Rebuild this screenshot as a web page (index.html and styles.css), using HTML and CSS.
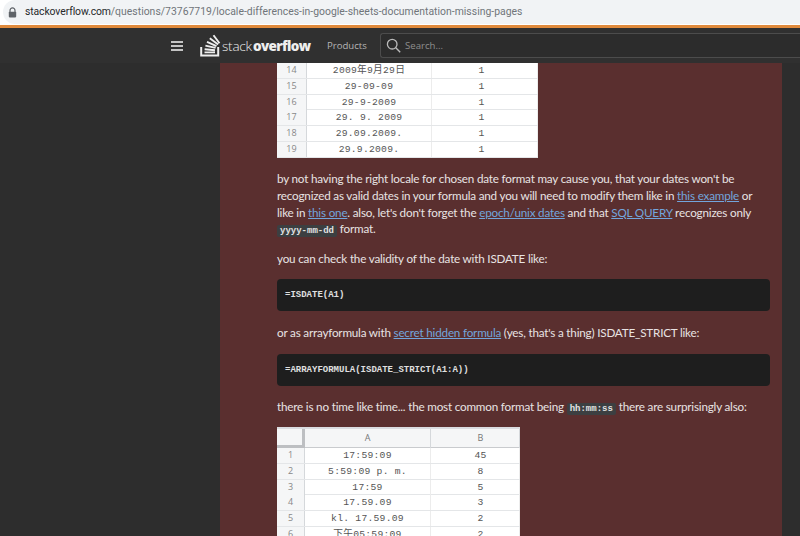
FILE: index.html
```html
<!DOCTYPE html>
<html lang="en">
<head>
<meta charset="utf-8">
<title>Locale differences in Google Sheets</title>
<link rel="stylesheet" href="styles.css">
</head>
<body>
<div class="addressbar">
  <div class="omnibox">
    <svg class="lock" width="9" height="11" viewBox="0 0 9 11"><path d="M2 5V3.4a2.5 2.5 0 0 1 5 0V5" fill="none" stroke="#5f6368" stroke-width="1.2"/><rect x="0.8" y="4.8" width="7.4" height="5.6" rx="0.8" fill="#5f6368"/></svg>
    <span class="url"><span class="host">stackoverflow.com</span>/questions/73767719/locale-differences-in-google-sheets-documentation-missing-pages</span>
  </div>
</div>
<header class="topbar">
  <div class="hamburger"><i></i><i></i><i></i></div>
  <div class="logo">
    <svg width="21" height="23" viewBox="0 0 21 23"><path d="M1.2 13v8.6h17V13" fill="none" stroke="#eee" stroke-width="2"/><path d="M4.5 18.4h10.5M4.6 15.3l10.4.9M5.4 11.6l10.2 2.3M7 7.8l9.5 4.3M9.8 4.3l8.3 6.2M13.5 1.2l6 8" fill="none" stroke="#eee" stroke-width="1.9"/></svg>
    <span class="wordmark">stack<b>overflow</b></span>
  </div>
  <span class="products">Products</span>
  <div class="search">
    <svg width="15" height="15" viewBox="0 0 15 15"><circle cx="6.2" cy="6.2" r="4.8" fill="none" stroke="#bbb" stroke-width="1.3"/><path d="M9.8 9.8l4.4 4.4" stroke="#bbb" stroke-width="1.4"/></svg>
    <span>Search...</span>
  </div>
</header>
<div class="page">
  <aside class="side"></aside>
  <main class="post">
    <div class="sheet sheet-one">
      <div class="row"><span class="num">14</span><span class="val">2009年9月29日</span><span class="val">1</span></div>
      <div class="row"><span class="num">15</span><span class="val">29-09-09</span><span class="val">1</span></div>
      <div class="row"><span class="num">16</span><span class="val">29-9-2009</span><span class="val">1</span></div>
      <div class="row"><span class="num">17</span><span class="val">29. 9. 2009</span><span class="val">1</span></div>
      <div class="row"><span class="num">18</span><span class="val">29.09.2009.</span><span class="val">1</span></div>
      <div class="row"><span class="num">19</span><span class="val">29.9.2009.</span><span class="val">1</span></div>
      <div class="row stub"><span class="num"></span><span class="val"></span><span class="val"></span></div>
    </div>
    <p class="para first">by not having the right locale for chosen date format may cause you, that your dates won't be recognized as valid dates in your formula and you will need to modify them like in <a href="#">this example</a> or like in <a href="#">this one</a>. also, let's don't forget the <a href="#">epoch/unix dates</a> and that <a href="#">SQL QUERY</a> recognizes only <code>yyyy-mm-dd</code> format.</p>
    <p class="para">you can check the validity of the date with ISDATE like:</p>
    <pre class="block">=ISDATE(A1)</pre>
    <p class="para">or as arrayformula with <a href="#">secret hidden formula</a> (yes, that's a thing) ISDATE_STRICT like:</p>
    <pre class="block">=ARRAYFORMULA(ISDATE_STRICT(A1:A))</pre>
    <p class="para">there is no time like time... the most common format being <code>hh:mm:ss</code> there are surprisingly also:</p>
    <div class="sheet sheet-two">
      <div class="row head"><span class="corner"></span><span class="col">A</span><span class="col">B</span></div>
      <div class="row"><span class="num">1</span><span class="val">17:59:09</span><span class="val">45</span></div>
      <div class="row"><span class="num">2</span><span class="val">5:59:09 p. m.</span><span class="val">8</span></div>
      <div class="row"><span class="num">3</span><span class="val">17:59</span><span class="val">5</span></div>
      <div class="row"><span class="num">4</span><span class="val">17.59.09</span><span class="val">3</span></div>
      <div class="row"><span class="num">5</span><span class="val">kl. 17.59.09</span><span class="val">2</span></div>
      <div class="row"><span class="num">6</span><span class="val">下午05:59:09</span><span class="val">2</span></div>
    </div>
  </main>
  <aside class="rail"></aside>
</div>
</body>
</html>
```

FILE: styles.css
```css
* { box-sizing: border-box; }
html, body { margin: 0; height: 536px; overflow: hidden; }
body { background: #2d2d2d; font-family: "Open Sans", "Noto Sans CJK JP", sans-serif; }

.addressbar { height: 25px; background: #fff; padding: 0 0 1px 3px; }
.omnibox { height: 24px; background: #f1f3f5; border-radius: 12px 0 0 12px; display: flex; align-items: center; padding-left: 5px; gap: 8px; }
.lock { flex: none; }
.url { font: 10.4px/1 Roboto, sans-serif; color: #70757a; white-space: nowrap; letter-spacing: 0.02px; }
.host { color: #26282b; letter-spacing: -0.1px; }

.topbar { height: 38px; background: #303030; border-top: 3px solid #e08a3c; display: flex; align-items: center; padding-left: 171px; box-shadow: 0 1px 0 #3b3b3b; }
.hamburger { width: 12px; display: flex; flex-direction: column; gap: 2px; margin-right: 17px; }
.hamburger i { display: block; height: 2px; background: #c4c4c4; }
.logo { display: flex; align-items: center; gap: 1px; width: 127px; flex: none; color: #eee; }
.wordmark { font-size: 13.5px; font-weight: 300; letter-spacing: -0.2px; white-space: nowrap; }
.wordmark b { font-weight: 800; letter-spacing: -0.6px; margin-left: 1px; }
.products { color: #b5b5b5; font-size: 9.6px; width: 53px; flex: none; }
.search { flex: 1; height: 25px; border: 1px solid #4c4c4c; border-right: 0; border-radius: 3px 0 0 3px; background: #2c2c2c; display: flex; align-items: center; gap: 4px; padding-left: 5px; color: #8e8e8e; font-size: 9.6px; }

.page { display: flex; height: 473px; }
.side { width: 220px; background: #2d2d2d; flex: none; }
.post { width: 562px; flex: none; background: #5a2f2f; padding-left: 57px; padding-right: 12px; overflow: hidden; }
.rail { flex: 1; background: #2d2d2d; }

.para { margin: 0 0 13px; font: 11.7px/16.8px Lato, sans-serif; letter-spacing: -0.2px; color: #e8e3e3; }
.para.first { margin-top: 12px; margin-bottom: 12.5px; }
.para a { color: #72a5dc; text-decoration: underline; }
code { font-family: "Liberation Mono", monospace; font-size: 9px; line-height: 1; white-space: nowrap; font-weight: 700; letter-spacing: 0; background: #3c3f41; color: #e2e2e2; padding: 1px 3px; border-radius: 2px; }
.block { margin: 0 0 12.5px; height: 32px; background: #1e1e1e; border-radius: 4px; padding: 0 8px; color: #e0e0e0; font: 700 9px/33px "Liberation Mono", monospace; }

.sheet { background: #fff; color: #555; font-family: "Liberation Mono", "Noto Sans CJK JP", monospace; font-size: 9.7px; }
.sheet-one { width: 261px; height: 95px; overflow: hidden; }
.sheet-two { width: 243px; margin-top: -1px; border-top: 2px solid #dadce0; }
.row { display: grid; height: 15.8px; border-bottom: 1px solid #e4e6e8; line-height: 15px; text-align: center; }
.sheet-one .row { grid-template-columns: 30px 125px 1fr; }
.sheet-two .row { grid-template-columns: 28px 126px 1fr; }
.sheet-one .val + .val { padding-right: 6px; }
.sheet-two .val + .val { padding-left: 11px; }
.sheet-two .col + .col { padding-left: 11px; }
.num { background: #f5f6f7; border-right: 1px solid #d5d8db; color: #888; font: 9px/14px "Open Sans", sans-serif; }
.val { border-right: 1px solid #ececec; white-space: nowrap; letter-spacing: 0.25px; }
.row.head { height: 19px; border-bottom: 1px solid #c9cbce; background: #f5f6f7; line-height: 18px; }
.corner { border-right: 3px solid #bdbfc2; border-bottom: 3px solid #bdbfc2; height: 19px; }
.col { border-right: 1px solid #d5d8db; color: #777; font: 9px/18px "Open Sans", sans-serif; }
```
